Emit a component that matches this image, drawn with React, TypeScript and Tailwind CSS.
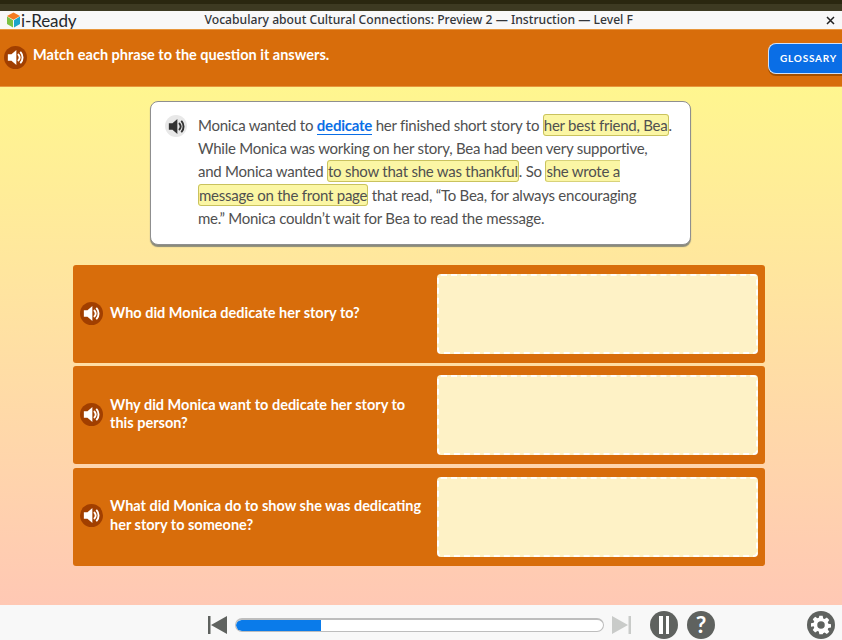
import React from 'react';

const BODY_FONT = "font-['Lato','Noto_Sans',sans-serif]";

const QUESTIONS = [
  { id: 1, lines: ['Who did Monica dedicate her story to?'] },
  { id: 2, lines: ['Why did Monica want to dedicate her story to', 'this person?'] },
  { id: 3, lines: ['What did Monica do to show she was dedicating', 'her story to someone?'] },
];

// speaker drawn inline, the icon packages have a rounder one
function Speaker({ color }: { color: string }) {
  return (
    <svg width="17" height="17" viewBox="0 0 16 16" fill="none">
      <path d="M0.800 5h3.400L8.800 1v14L4.200 11H0.800z" fill={color} />
      <path d="M10.800 5.200c1.300 1.600 1.300 4 0 5.600" stroke={color} strokeWidth="1.800" strokeLinecap="round" />
      <path d="M12.900 3.200c2.300 2.700 2.300 6.900 0 9.600" stroke={color} strokeWidth="1.800" strokeLinecap="round" />
    </svg>
  );
}

function AudioButton() {
  return (
    <div className="flex h-[23px] w-[23px] shrink-0 items-center justify-center rounded-full bg-[#a13f00]">
      <Speaker color="#ffffff" />
    </div>
  );
}

function Mark({ children, open }: { children: React.ReactNode; open?: boolean }) {
  return (
    <span
      className={
        open
          ? 'rounded-l-[3px] border-y border-l border-y-[#d8d27a] border-l-[#c9c25e] bg-[#fbf6a4] py-px'
          : 'rounded-[3px] border border-[#c9c25e] bg-[#fbf6a4] py-px'
      }
    >
      {children}
    </span>
  );
}

function Logo() {
  return (
    <div className="flex items-center">
      <svg width="15" height="16" viewBox="0 0 15 16">
        <path d="M7.500 0.500 14 4 7.500 7.800 1 4z" fill="#f47b20" />
        <path d="M1 4.600 7 8.200V15.500L1 12z" fill="#7ac143" />
        <path d="M14 4.600 8 8.200V15.500L14 12z" fill="#1aa6c9" />
      </svg>
      <span className="font-['Lato',sans-serif] text-[17px] leading-none tracking-[-0.1px] text-[#26282b]">i-Ready</span>
    </div>
  );
}

export default function App() {
  return (
    <div className={`flex h-[640px] w-[842px] flex-col overflow-hidden ${BODY_FONT}`}>
      {/* 上の暗いバー */}
      <div className="h-[11px] shrink-0 border-t-4 border-[#2a2710] bg-[#3d3a22]" />

      {/* title bar */}
      <div className="flex h-[18px] shrink-0 items-center bg-[#f8f8f8] pl-[6px] pr-[7px]">
        <Logo />
        <span className="ml-[128px] font-['Noto_Sans',sans-serif] text-[12.150px] font-medium text-[#33363a]">
          Vocabulary about Cultural Connections: Preview 2 — Instruction — Level F
        </span>
        <svg className="ml-auto" width="9" height="9" viewBox="0 0 9 9" stroke="#222" strokeWidth="1.500">
          <path d="M1 1l7 7M8 1l-7 7" />
        </svg>
      </div>

      {/* instruction */}
      <div className="flex h-[58px] shrink-0 items-start border-y border-[#e8963c] bg-[#d86d0b] pl-1 pt-[16px]">
        <AudioButton />
        <p className="ml-[6px] text-[14.500px] font-bold leading-[18px] text-white">Match each phrase to the question it answers.</p>
        <div className="ml-auto mt-[-3px] flex h-[31px] w-[74px] items-center rounded-l-[8px] border border-r-0 border-[#cfe0f7] bg-[#0a6ee6] pl-[11px] text-[10px] font-bold tracking-[0.800px] text-white shadow-[0_2px_0_#a34f00]">
          GLOSSARY
        </div>
      </div>

      {/* content */}
      <div className="flex flex-1 flex-col items-start bg-gradient-to-b from-[#fff68f] to-[#ffc8b4] pt-[14px]">
        <div className="ml-[150px] flex h-[144px] w-[541px] rounded-[8px] border border-[#8f8f8f] bg-white pl-[14px] pt-[12px] shadow-[0_2px_1px_#8a8a7a]">
          <div className="mt-px flex h-[22px] w-[22px] shrink-0 items-center justify-center rounded-full bg-[#e8e8e8]">
            <Speaker color="#333333" />
          </div>
          <p className="ml-[11px] whitespace-nowrap text-[15px] leading-[23.200px] tracking-[-0.240px] text-[#505050]">
            Monica wanted to <span className="border-b-[1.500px] border-[#0a6ee6] font-bold text-[#0a6ee6]">dedicate</span> her finished short story to <Mark>her best friend, Bea</Mark>.
            <br />
            While Monica was working on her story, Bea had been very supportive,
            <br />
            and Monica wanted <Mark>to show that she was thankful</Mark>. So <Mark open>she wrote a</Mark>
            <br />
            <Mark>message on the front page</Mark> that read, “To Bea, for always encouraging
            <br />
            me.” Monica couldn’t wait for Bea to read the message.
          </p>
        </div>

        <div className="ml-[73px] mt-[20px] flex w-[692px] flex-col gap-[3.400px]">
          {QUESTIONS.map((q) => (
            <div key={q.id} className="flex h-[98px] items-center rounded-[3px] bg-[#d86d0b] px-[7px]">
              <div className="mb-[2px]">
                <AudioButton />
              </div>
              <p className="mb-[2px] ml-[7px] w-[327px] whitespace-nowrap text-[14.500px] font-bold leading-[18.500px] text-white">
                {q.lines.map((line) => (
                  <span key={line} className="block">{line}</span>
                ))}
              </p>
              <div className="h-[80px] flex-1 rounded-[4px] border-2 border-dashed border-white bg-[#fef2c6]" />
            </div>
          ))}
        </div>
      </div>

      {/* player controls */}
      <div className="flex h-[35px] shrink-0 items-center bg-[#f8f8f8] pl-[208px] pt-[4px]">
        <svg width="19" height="18" viewBox="0 0 19 18" fill="#5f625f">
          <path d="M0 0h2.500v18H0zM19 0v18L3 9z" />
        </svg>
        <div className="ml-[8px] h-[14px] w-[369px] overflow-hidden rounded-full border border-t-2 border-[#bdbdbd] bg-white">
          <div className="h-full w-[85px] rounded-l-full bg-[#0a7bea]" />
        </div>
        <svg className="ml-[8px]" width="19" height="18" viewBox="0 0 19 18" fill="#c9cbc9">
          <path d="M0 0v18L16 9zM16.500 0H19v18h-2.500z" />
        </svg>
        <div className="ml-[19px] flex h-[28px] w-[28px] items-center justify-center gap-[3px] rounded-full bg-[#5f625f]">
          <span className="h-[18px] w-[3.500px] bg-white" />
          <span className="h-[18px] w-[3.500px] bg-white" />
        </div>
        <div className="ml-[9px] flex h-[28px] w-[28px] items-center justify-center rounded-full bg-[#5f625f] text-[23px] font-bold leading-none text-white">?</div>
        <div className="ml-[92px] flex h-[28px] w-[28px] items-center justify-center rounded-full bg-[#5f625f]">
          <svg width="20" height="20" viewBox="0 0 24 24" fill="#fff">
            <path fillRule="evenodd" d="M10 1h4l.6 3.200 1.700.7L19 3.100l2.900 2.900-1.800 2.700.7 1.700 3.200.6v4l-3.200.6-.7 1.700 1.800 2.700-2.900 2.900-2.700-1.800-1.700.7L14 23h-4l-.6-3.200-1.700-.7L5 20.900l-2.900-2.900 1.800-2.700-.7-1.700L0 14v-4l3.200-.6.7-1.700L2.100 5 5 2.100l2.700 1.800 1.700-.7zM12 7.500a4.500 4.500 0 1 0 0 9 4.500 4.500 0 0 0 0-9z" />
          </svg>
        </div>
      </div>
    </div>
  );
}
